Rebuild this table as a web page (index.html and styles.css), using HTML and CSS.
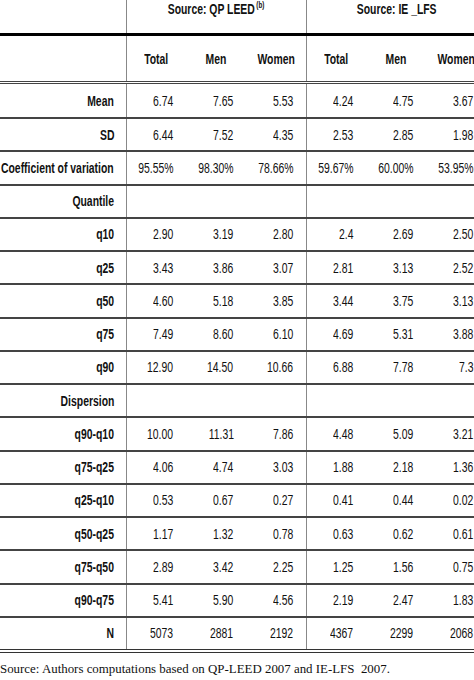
FILE: index.html
```html
<!DOCTYPE html>
<html>
<head>
<meta charset="utf-8">
<link rel="stylesheet" href="styles.css">
</head>
<body>
<div class="page">
  <div class="table">
    <div class="row h1">
      <div class="cell"></div>
      <div class="cell group sep"><span class="t">Source: QP LEED<span class="sup">(b)</span></span></div>
      <div class="cell group sep"><span class="t">Source: IE _LFS</span></div>
    </div>
    <div class="row h2">
      <div class="cell"></div>
      <div class="cell head sep"><span class="t">Total</span></div>
      <div class="cell head"><span class="t">Men</span></div>
      <div class="cell head"><span class="t">Women</span></div>
      <div class="cell head sep"><span class="t">Total</span></div>
      <div class="cell head"><span class="t">Men</span></div>
      <div class="cell head"><span class="t">Women</span></div>
    </div>
    <div class="row first"><div class="cell label"><span class="t">Mean</span></div><div class="cell sep"><span class="t">6.74</span></div><div class="cell"><span class="t">7.65</span></div><div class="cell"><span class="t">5.53</span></div><div class="cell sep"><span class="t">4.24</span></div><div class="cell"><span class="t">4.75</span></div><div class="cell"><span class="t">3.67</span></div></div>
    <div class="row"><div class="cell label"><span class="t">SD</span></div><div class="cell sep"><span class="t">6.44</span></div><div class="cell"><span class="t">7.52</span></div><div class="cell"><span class="t">4.35</span></div><div class="cell sep"><span class="t">2.53</span></div><div class="cell"><span class="t">2.85</span></div><div class="cell"><span class="t">1.98</span></div></div>
    <div class="row"><div class="cell label"><span class="t">Coefficient of variation</span></div><div class="cell sep"><span class="t">95.55%</span></div><div class="cell"><span class="t">98.30%</span></div><div class="cell"><span class="t">78.66%</span></div><div class="cell sep"><span class="t">59.67%</span></div><div class="cell"><span class="t">60.00%</span></div><div class="cell"><span class="t">53.95%</span></div></div>
    <div class="row"><div class="cell label"><span class="t">Quantile</span></div><div class="cell sep"></div><div class="cell"></div><div class="cell"></div><div class="cell sep"></div><div class="cell"></div><div class="cell"></div></div>
    <div class="row"><div class="cell label"><span class="t">q10</span></div><div class="cell sep"><span class="t">2.90</span></div><div class="cell"><span class="t">3.19</span></div><div class="cell"><span class="t">2.80</span></div><div class="cell sep"><span class="t">2.4</span></div><div class="cell"><span class="t">2.69</span></div><div class="cell"><span class="t">2.50</span></div></div>
    <div class="row"><div class="cell label"><span class="t">q25</span></div><div class="cell sep"><span class="t">3.43</span></div><div class="cell"><span class="t">3.86</span></div><div class="cell"><span class="t">3.07</span></div><div class="cell sep"><span class="t">2.81</span></div><div class="cell"><span class="t">3.13</span></div><div class="cell"><span class="t">2.52</span></div></div>
    <div class="row"><div class="cell label"><span class="t">q50</span></div><div class="cell sep"><span class="t">4.60</span></div><div class="cell"><span class="t">5.18</span></div><div class="cell"><span class="t">3.85</span></div><div class="cell sep"><span class="t">3.44</span></div><div class="cell"><span class="t">3.75</span></div><div class="cell"><span class="t">3.13</span></div></div>
    <div class="row"><div class="cell label"><span class="t">q75</span></div><div class="cell sep"><span class="t">7.49</span></div><div class="cell"><span class="t">8.60</span></div><div class="cell"><span class="t">6.10</span></div><div class="cell sep"><span class="t">4.69</span></div><div class="cell"><span class="t">5.31</span></div><div class="cell"><span class="t">3.88</span></div></div>
    <div class="row"><div class="cell label"><span class="t">q90</span></div><div class="cell sep"><span class="t">12.90</span></div><div class="cell"><span class="t">14.50</span></div><div class="cell"><span class="t">10.66</span></div><div class="cell sep"><span class="t">6.88</span></div><div class="cell"><span class="t">7.78</span></div><div class="cell"><span class="t">7.3</span></div></div>
    <div class="row"><div class="cell label"><span class="t">Dispersion</span></div><div class="cell sep"></div><div class="cell"></div><div class="cell"></div><div class="cell sep"></div><div class="cell"></div><div class="cell"></div></div>
    <div class="row"><div class="cell label"><span class="t">q90-q10</span></div><div class="cell sep"><span class="t">10.00</span></div><div class="cell"><span class="t">11.31</span></div><div class="cell"><span class="t">7.86</span></div><div class="cell sep"><span class="t">4.48</span></div><div class="cell"><span class="t">5.09</span></div><div class="cell"><span class="t">3.21</span></div></div>
    <div class="row"><div class="cell label"><span class="t">q75-q25</span></div><div class="cell sep"><span class="t">4.06</span></div><div class="cell"><span class="t">4.74</span></div><div class="cell"><span class="t">3.03</span></div><div class="cell sep"><span class="t">1.88</span></div><div class="cell"><span class="t">2.18</span></div><div class="cell"><span class="t">1.36</span></div></div>
    <div class="row"><div class="cell label"><span class="t">q25-q10</span></div><div class="cell sep"><span class="t">0.53</span></div><div class="cell"><span class="t">0.67</span></div><div class="cell"><span class="t">0.27</span></div><div class="cell sep"><span class="t">0.41</span></div><div class="cell"><span class="t">0.44</span></div><div class="cell"><span class="t">0.02</span></div></div>
    <div class="row"><div class="cell label"><span class="t">q50-q25</span></div><div class="cell sep"><span class="t">1.17</span></div><div class="cell"><span class="t">1.32</span></div><div class="cell"><span class="t">0.78</span></div><div class="cell sep"><span class="t">0.63</span></div><div class="cell"><span class="t">0.62</span></div><div class="cell"><span class="t">0.61</span></div></div>
    <div class="row"><div class="cell label"><span class="t">q75-q50</span></div><div class="cell sep"><span class="t">2.89</span></div><div class="cell"><span class="t">3.42</span></div><div class="cell"><span class="t">2.25</span></div><div class="cell sep"><span class="t">1.25</span></div><div class="cell"><span class="t">1.56</span></div><div class="cell"><span class="t">0.75</span></div></div>
    <div class="row"><div class="cell label"><span class="t">q90-q75</span></div><div class="cell sep"><span class="t">5.41</span></div><div class="cell"><span class="t">5.90</span></div><div class="cell"><span class="t">4.56</span></div><div class="cell sep"><span class="t">2.19</span></div><div class="cell"><span class="t">2.47</span></div><div class="cell"><span class="t">1.83</span></div></div>
    <div class="row last"><div class="cell label"><span class="t">N</span></div><div class="cell sep"><span class="t">5073</span></div><div class="cell"><span class="t">2881</span></div><div class="cell"><span class="t">2192</span></div><div class="cell sep"><span class="t">4367</span></div><div class="cell"><span class="t">2299</span></div><div class="cell"><span class="t">2068</span></div></div>
  </div>
  <p class="caption">Source: Authors computations based on QP-LEED 2007 and IE-LFS&nbsp; 2007.</p>
</div>
</body>
</html>
```
FILE: styles.css
```css
html, body {
  margin: 0;
  padding: 0;
  background: #ffffff;
}

.page {
  width: 474px;
  height: 680px;
  overflow: hidden;
}

.table {
  width: 486px;
  font-family: "Liberation Sans", Arial, sans-serif;
  font-size: 14px;
  color: #111111;
}

.row {
  display: grid;
  grid-template-columns: 126px repeat(6, 60px);
  box-sizing: border-box;
  height: 33.25px;
  border-bottom: 2px solid #444444;
}

.row.h1 {
  height: 36px;
  border-bottom: 3px solid #000000;
}

.row.h2 {
  height: 48px;
  border-bottom: 3px double #444444;
}

.row.first {
  height: 35px;
}

.row.last {
  border-bottom: 4px double #333333;
  height: 35px;
}

.cell {
  display: flex;
  align-items: center;
  justify-content: flex-end;
  box-sizing: border-box;
  padding-right: 12.5px;
  white-space: nowrap;
  min-width: 0;
}

.t {
  display: inline-block;
  flex: none;
  transform: scaleX(0.743);
  transform-origin: right center;
}

.sep {
  border-left: 1px solid #888888;
}

.label {
  font-weight: bold;
  padding-right: 12px;
}

.group {
  grid-column: span 3;
  justify-content: center;
  align-items: flex-start;
  padding: 0;
  font-weight: bold;
  line-height: 16px;
  padding-top: 1px;
}

.group .t,
.head .t {
  transform-origin: center center;
}

.sup {
  font-size: 8.5px;
  line-height: 9px;
  vertical-align: top;
  margin-left: 2px;
}

.head {
  justify-content: center;
  padding: 0;
  font-weight: bold;
}

.caption {
  margin: 9px 0 0 0;
  font-family: "Liberation Serif", "Times New Roman", serif;
  font-size: 12.9px;
  line-height: 15px;
  color: #111111;
}
```
